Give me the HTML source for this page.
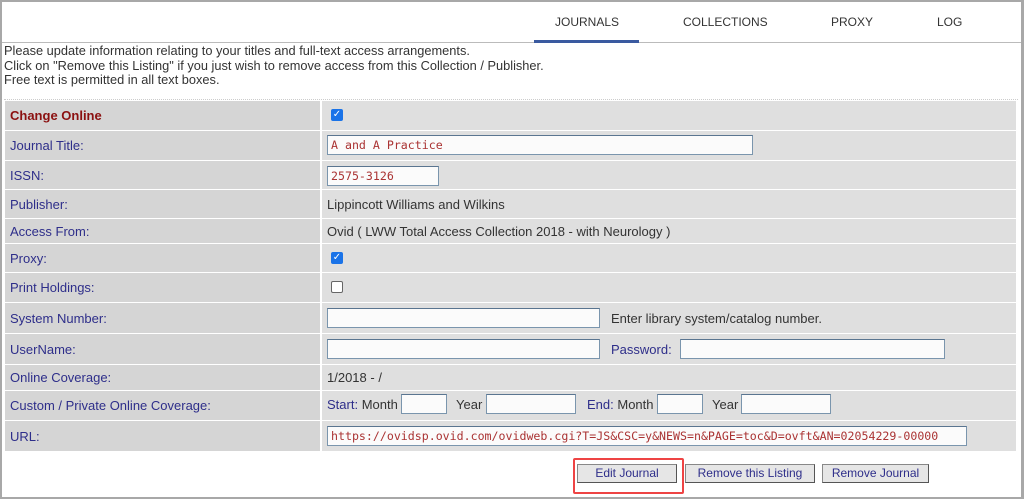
<!DOCTYPE html><html><head><style>
*{margin:0;padding:0;box-sizing:border-box}
body{width:1024px;height:499px;background:#fff;font-family:"Liberation Sans",Arial,sans-serif;font-size:13px;color:#333;position:relative;overflow:hidden}
.frame{position:absolute;left:0;top:0;width:1024px;height:499px;border:2px solid #a8a8a8;border-right-width:3px}
.a{position:absolute}
.nav{top:15px;font-size:12px;color:#333}
.lbl{position:absolute;left:5px;width:315px;background:#d5d5d5;color:#2e2e8a;padding-left:5px;display:flex;align-items:center}
.val{position:absolute;left:322px;width:694px;background:#dfdfdf;padding-left:5px;display:flex;align-items:center;color:#333}
.inp{position:absolute;height:20px;background:#fbfbfb;border:1px solid #7a95ad;border-top-color:#5a7590;font-family:"DejaVu Sans Mono","Liberation Mono",monospace;font-size:11.6px;color:#a33;padding-left:3px;line-height:18px;overflow:hidden;white-space:nowrap}
.cb{position:absolute;width:12px;height:12px;border-radius:2px;background:#1a73e8;color:#fff;font-size:10px;line-height:12px;text-align:center}
.cbe{position:absolute;width:12px;height:12px;border-radius:2px;border:1px solid #666;background:#fff}
.btn{position:absolute;top:464px;height:19px;background:#e6e6e6;border:1px solid #888;border-right-color:#555;border-bottom-color:#555;color:#2e2e8a;font-size:12px;text-align:center;line-height:17px}
.s{position:absolute;top:397px;font-size:13px}
</style></head><body>
<div class="frame"></div>
<div class="a nav" style="left:555px">JOURNALS</div>
<div class="a nav" style="left:683px">COLLECTIONS</div>
<div class="a nav" style="left:831px">PROXY</div>
<div class="a nav" style="left:937px">LOG</div>
<div class="a" style="left:2px;top:42px;width:1019px;height:1px;background:#bbb"></div>
<div class="a" style="left:534px;top:40px;width:105px;height:3px;background:#3a5aa0"></div>
<div class="a" style="left:4px;top:44px;line-height:14.5px;font-size:12.8px;color:#333">Please update information relating to your titles and full-text access arrangements.<br>Click on "Remove this Listing" if you just wish to remove access from this Collection / Publisher.<br>Free text is permitted in all text boxes.</div>
<div class="a" style="left:4px;top:99px;width:1014px;height:354px;background:#fff;border-top:1px dotted #ccc"></div>

<div class="lbl" style="top:101px;height:29px;color:#8b1010;font-weight:bold">Change Online</div>
<div class="val" style="top:101px;height:29px"></div><div class="cb" style="left:331px;top:109px">✓</div>
<div class="lbl" style="top:131px;height:29px">Journal Title:</div>
<div class="val" style="top:131px;height:29px"></div><div class="inp" style="left:327px;top:135px;width:426px">A and A Practice</div>
<div class="lbl" style="top:161px;height:28px">ISSN:</div>
<div class="val" style="top:161px;height:28px"></div><div class="inp" style="left:327px;top:166px;width:112px">2575-3126</div>
<div class="lbl" style="top:190px;height:28px">Publisher:</div>
<div class="val" style="top:190px;height:28px">Lippincott Williams and Wilkins</div>
<div class="lbl" style="top:219px;height:24px">Access From:</div>
<div class="val" style="top:219px;height:24px">Ovid ( LWW Total Access Collection 2018 - with Neurology )</div>
<div class="lbl" style="top:244px;height:28px">Proxy:</div>
<div class="val" style="top:244px;height:28px"></div><div class="cb" style="left:331px;top:252px">✓</div>
<div class="lbl" style="top:273px;height:29px">Print Holdings:</div>
<div class="val" style="top:273px;height:29px"></div><div class="cbe" style="left:331px;top:281px"></div>
<div class="lbl" style="top:303px;height:30px">System Number:</div>
<div class="val" style="top:303px;height:30px"><span style="margin-left:284px">Enter library system/catalog number.</span></div><div class="inp" style="left:327px;top:308px;width:273px"></div>
<div class="lbl" style="top:334px;height:30px">UserName:</div>
<div class="val" style="top:334px;height:30px"><span style="margin-left:284px;color:#2e2e8a">Password:</span></div><div class="inp" style="left:327px;top:339px;width:273px"></div><div class="inp" style="left:680px;top:339px;width:265px"></div>
<div class="lbl" style="top:365px;height:25px">Online Coverage:</div>
<div class="val" style="top:365px;height:25px">1/2018 - /</div>
<div class="lbl" style="top:391px;height:29px">Custom / Private Online Coverage:</div>
<div class="val" style="top:391px;height:29px"></div>
<span class="s" style="left:327px"><span style="color:#2e2e8a">Start:</span> Month</span>
<span class="s" style="left:456px">Year</span>
<span class="s" style="left:587px"><span style="color:#2e2e8a">End:</span> Month</span>
<span class="s" style="left:712px">Year</span>
<div class="inp" style="left:401px;top:394px;width:46px"></div><div class="inp" style="left:486px;top:394px;width:90px"></div>
<div class="inp" style="left:657px;top:394px;width:46px"></div><div class="inp" style="left:741px;top:394px;width:90px"></div>
<div class="lbl" style="top:421px;height:30px">URL:</div>
<div class="val" style="top:421px;height:30px"></div><div class="inp" style="left:327px;top:426px;width:640px">https://ovidsp.ovid.com/ovidweb.cgi?T=JS&amp;CSC=y&amp;NEWS=n&amp;PAGE=toc&amp;D=ovft&amp;AN=02054229-00000</div>

<div class="a" style="left:573px;top:458px;width:111px;height:36px;border:2px solid #e44;border-radius:2px"></div>
<div class="btn" style="left:577px;width:100px">Edit Journal</div>
<div class="btn" style="left:685px;width:130px">Remove this Listing</div>
<div class="btn" style="left:822px;width:107px">Remove Journal</div>
</body></html>
